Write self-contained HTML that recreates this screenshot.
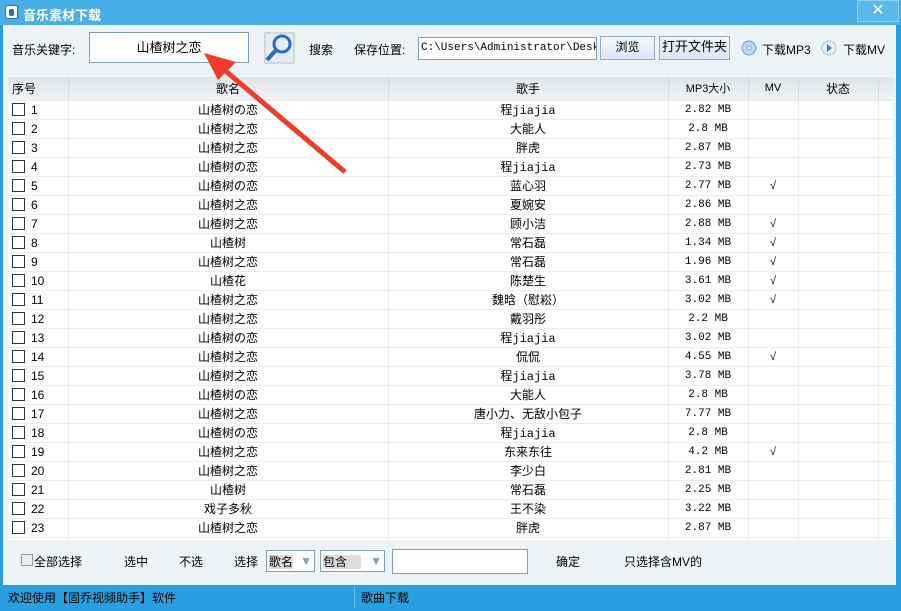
<!DOCTYPE html><html><head><meta charset="utf-8"><style>
*{margin:0;padding:0;box-sizing:border-box}
body{width:901px;height:611px;overflow:hidden;background:#2a9fe0;font-family:"Liberation Sans","Noto Sans CJK SC",sans-serif;font-size:12px;color:#000;position:relative}
.abs{position:absolute}
#title{left:0;top:0;width:901px;height:25px;background:#48aee6}
#content{left:3px;top:25px;width:893px;height:560px;background:#eef3f8}
.btn{position:absolute;background:linear-gradient(#f4f8fc,#d9e8f7);border:1px solid #8eabc9;text-align:center;line-height:20px;font-size:12px}
table{border-collapse:collapse;table-layout:fixed}
td{height:19px;border-right:1px solid #ececec;border-bottom:1px solid #ececec;text-align:center;font-size:12px;white-space:nowrap;overflow:hidden;padding:0}
td.n{text-align:left;padding-left:4px}
.cb{display:inline-block;width:13px;height:13px;border:1px solid #333;vertical-align:-2px;margin-right:6px;background:#fff}
td.s{font-family:"Liberation Mono",monospace;font-size:11px}
</style></head><body>
<div id="title" class="abs">
 <div class="abs" style="left:5px;top:5px;width:13px;height:14px;background:#fff;border-radius:3px;border:1px solid #2a6ea0"><div style="margin:3px auto 0;width:5px;height:7px;background:#2a6ea0;border-radius:2px"></div></div>
 <div class="abs" style="left:23px;top:5px;color:#fff;font-size:13px;font-weight:bold">音乐素材下载</div>
 <div class="abs" style="left:857px;top:0;width:42px;height:22px;background:#5cb8ea;border:1px solid #8fd0f2;color:#fff;text-align:center;font-size:16px;line-height:20px">✕</div>
</div>
<div id="content" class="abs"></div>
<div class="abs" style="left:12px;top:41px">音乐关键字:</div>
<div class="abs" style="left:89px;top:32px;width:160px;height:31px;background:#fff;border:1px solid #7f9db9;text-align:center;line-height:29px;font-size:13px">山楂树之恋</div>
<svg class="abs" style="left:263px;top:32px" width="32" height="32"><rect x="2" y="1" width="29" height="30" fill="#e8edf3" stroke="#bbb"/><circle cx="19" cy="12" r="8" fill="#dfeefa" stroke="#2a6cc0" stroke-width="3"/><line x1="13" y1="18" x2="4" y2="28" stroke="#2a6cc0" stroke-width="4"/></svg>
<div class="abs" style="left:309px;top:41px">搜索</div>
<div class="abs" style="left:354px;top:41px">保存位置:</div>
<div class="abs" style="left:418px;top:37px;width:179px;height:23px;background:#fff;border:1px solid #7f9db9;font-family:'Liberation Mono',monospace;font-size:11px;line-height:21px;padding-left:2px;overflow:hidden;white-space:nowrap">C:\Users\Administrator\Desktop</div>
<div class="btn" style="left:600px;top:36px;width:55px;height:24px">浏览</div>
<div class="btn" style="left:659px;top:36px;width:71px;height:24px;font-size:13px">打开文件夹</div>
<svg class="abs" style="left:741px;top:40px" width="16" height="16"><circle cx="8" cy="8" r="7" fill="#bfd8f2" stroke="#6b9fd4"/><circle cx="8" cy="8" r="2" fill="#fff" stroke="#6b9fd4"/></svg>
<div class="abs" style="left:762px;top:41px">下载MP3</div>
<svg class="abs" style="left:821px;top:40px" width="16" height="16"><circle cx="8" cy="8" r="7" fill="#e6f0fa" stroke="#a0c0e0"/><path d="M6 4 L11 8 L6 12Z" fill="#3a7ac8"/></svg>
<div class="abs" style="left:843px;top:41px">下载MV</div>
<div class="abs" style="left:8px;top:77px;width:885px;height:463px;background:#fff;overflow:hidden">
<table style="width:885px">
<tr style="background:linear-gradient(#e0e5ea,#f0f3f6)"><td style="width:60px;height:23px;text-align:left;padding-left:4px;border-right:1px solid #d8d8d8">序号</td><td style="width:320px;border-right:1px solid #d8d8d8">歌名</td><td style="width:280px;border-right:1px solid #d8d8d8">歌手</td><td style="width:80px;font-size:11px;border-right:1px solid #d8d8d8">MP3大小</td><td style="width:50px;font-size:11px;border-right:1px solid #d8d8d8">MV</td><td style="width:80px;border-right:1px solid #d8d8d8">状态</td><td style="width:15px"></td></tr>
<tbody id="tb"></tbody></table></div>
<script>
var d=[["山楂树の恋","程jiajia","2.82",""],["山楂树之恋","大能人","2.8",""],["山楂树之恋","胖虎","2.87",""],["山楂树の恋","程jiajia","2.73",""],["山楂树の恋","蓝心羽","2.77","√"],["山楂树之恋","夏婉安","2.86",""],["山楂树之恋","顾小洁","2.88","√"],["山楂树","常石磊","1.34","√"],["山楂树之恋","常石磊","1.96","√"],["山楂花","陈楚生","3.61","√"],["山楂树之恋","魏晗（慰崧）","3.02","√"],["山楂树之恋","戴羽彤","2.2",""],["山楂树の恋","程jiajia","3.02",""],["山楂树之恋","侃侃","4.55","√"],["山楂树之恋","程jiajia","3.78",""],["山楂树の恋","大能人","2.8",""],["山楂树之恋","唐小力、无敌小包子","7.77",""],["山楂树の恋","程jiajia","2.8",""],["山楂树之恋","东来东往","4.2","√"],["山楂树之恋","李少白","2.81",""],["山楂树","常石磊","2.25",""],["戏子多秋","王不染","3.22",""],["山楂树之恋","胖虎","2.87",""],["山楂树","常石","2.1","√"]];
var h="";d.forEach(function(r,i){h+='<tr><td class="n"><span class="cb"></span>'+(i+1)+'</td><td>'+r[0]+'</td><td>'+r[1].replace(/jiajia/,'<span style="font-family:Liberation Mono,monospace">jiajia</span>')+'</td><td class="s">'+r[2]+' MB</td><td style="font-size:11px">'+r[3]+'</td><td></td><td></td></tr>'});
document.getElementById("tb").innerHTML=h;
</script>
<div class="abs" style="left:3px;top:540px;width:893px;height:45px;background:#eef3f8"></div>
<div class="abs" style="left:21px;top:554px;width:12px;height:12px;border:1px solid #999;background:#eee"></div>
<div class="abs" style="left:34px;top:553px">全部选择</div>
<div class="abs" style="left:124px;top:553px">选中</div>
<div class="abs" style="left:179px;top:553px">不选</div>
<div class="abs" style="left:234px;top:553px">选择</div>
<div class="abs" style="left:266px;top:550px;width:49px;height:22px;border:1px solid #7f9db9;background:#fff;padding:2px 0 0 2px"><span style="background:#ddd">歌名</span><span style="color:#7f9db9;position:absolute;right:2px;top:3px">▼</span></div>
<div class="abs" style="left:320px;top:550px;width:65px;height:22px;border:1px solid #7f9db9;background:#fff;padding:2px 0 0 2px"><span style="background:#ddd;padding-right:14px">包含</span><span style="color:#7f9db9;position:absolute;right:2px;top:3px">▼</span></div>
<div class="abs" style="left:392px;top:549px;width:136px;height:25px;border:1px solid #7f9db9;background:#fff"></div>
<div class="abs" style="left:556px;top:553px">确定</div>
<div class="abs" style="left:624px;top:553px">只选择含MV的</div>
<div class="abs" style="left:8px;top:589px">欢迎使用【固乔视频助手】软件</div>
<div class="abs" style="left:354px;top:586px;width:1px;height:22px;background:#6cc0ec"></div>
<div class="abs" style="left:361px;top:589px">歌曲下载</div>
<svg class="abs" style="left:0;top:0" width="901" height="611"><line x1="345" y1="172" x2="222" y2="68" stroke="#f03a2a" stroke-width="5"/><path d="M204 53 L236 62 L218 80Z" fill="#f03a2a"/></svg>
</body></html>
